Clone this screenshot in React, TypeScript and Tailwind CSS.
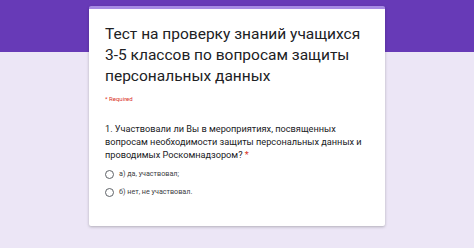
const options = ['а) да, участвовал;', 'б) нет, не участвовал.']

export default function App() {
  return (
    <div className="w-[474px] h-[248px] overflow-hidden bg-[linear-gradient(to_bottom,#673ab7_52px,#ece6f6_52px)] pt-[6px] font-['Roboto','Noto_Sans',sans-serif]">
      {/* Form card */}
      <div className="mx-auto w-[296px] h-[220px] bg-white border-t-[3px] border-[#a78be4] rounded-[2px] shadow-[0_1px_3px_rgba(0,0,0,0.25)] px-4 pt-[15px]">
        <h1 className="text-[15.5px] leading-[21px] text-[#202124]">
          Тест на проверку знаний учащихся 3-5 классов по вопросам защиты персональных данных
        </h1>
        <p className="mt-[8px] text-[6px] leading-[8px] text-[#d93025]">* Required</p>

        <div className="mt-[19px]">
          <p className="text-[9.2px] leading-[13px] text-[#202124]">
            1. Участвовали ли Вы в мероприятиях, посвященных вопросам необходимости защиты персональных данных и
            проводимых Роскомнадзором? <span className="text-[#d93025]">*</span>
          </p>
          <div className="mt-[8px] flex flex-col gap-[8px]">
            {options.map((o) => (
              <label key={o} className="flex items-center gap-[5px] h-[10px]">
                <span className="w-[9px] h-[9px] rounded-full border border-[#5f6368] shrink-0" />
                <span className="text-[7.2px] leading-[10px] text-[#3c4043]">{o}</span>
              </label>
            ))}
          </div>
        </div>
      </div>
    </div>
  )
}
